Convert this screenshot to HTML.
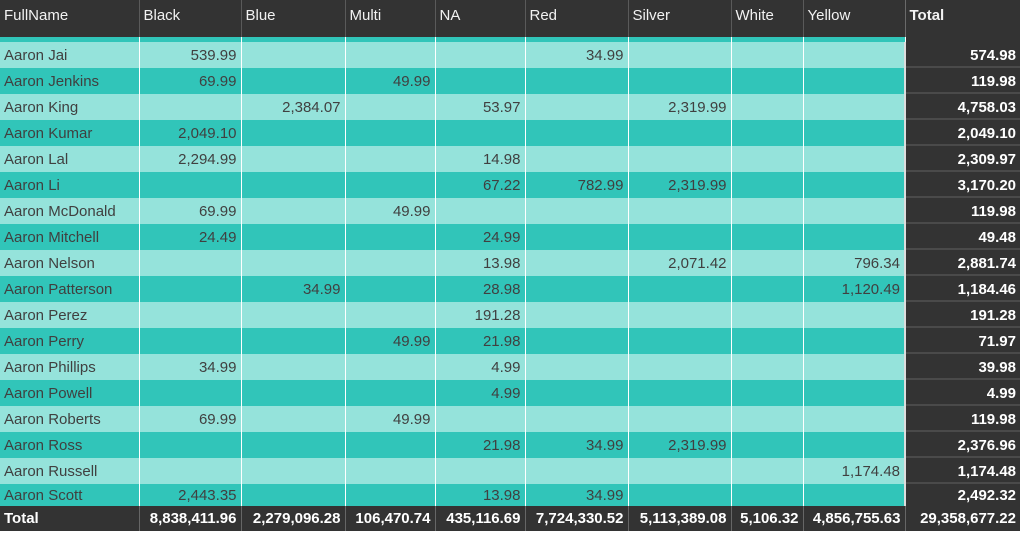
<!DOCTYPE html>
<html><head><meta charset="utf-8"><style>
html,body{margin:0;padding:0;background:#fff;width:1024px;height:534px;overflow:hidden}
table{border-collapse:collapse;table-layout:fixed;width:1020px;font-family:"Liberation Sans",sans-serif;font-size:15px;position:absolute;left:0;top:0}
td{padding:0 4px;white-space:nowrap;overflow:hidden;text-align:right;color:#404040;border:none;border-left:1px solid rgba(255,255,255,0.25);box-sizing:border-box}
td:first-child{text-align:left;border-left:none}
tr.h td{background:#333;color:#f2f2f2;height:37px;text-align:left;vertical-align:top;padding-top:7px;border-left:1px solid #5a5a5a}
tr.h td:first-child{border-left:none}
tr.sp td{height:5px;background:#31c5b9;padding:0}
tr.l td{background:#95e3db;height:26px}
tr.d td{background:#31c5b9;height:26px}
td.t{background:#333 linear-gradient(#333 0,#333 24px,#4a4a4a 24px,#4a4a4a 26px)!important;color:#fff;font-weight:bold;border-left:2px solid #ddd}
tr.h td.t{border-left:1px solid #6a6a6a;background:#333!important}
tr.f td{background:#333;color:#fff;font-weight:bold;height:25px;border-left:1px solid #666}
tr.f td:first-child{border-left:none}
tr.last td{height:22px}
</style></head><body>
<table>
<colgroup><col style="width:139px"><col style="width:102px"><col style="width:104px"><col style="width:90px"><col style="width:90px"><col style="width:103px"><col style="width:103px"><col style="width:72px"><col style="width:102px"><col style="width:115px"></colgroup>
<tr class="h"><td>FullName</td><td>Black</td><td>Blue</td><td>Multi</td><td>NA</td><td>Red</td><td>Silver</td><td>White</td><td>Yellow</td><td class="t">Total</td></tr>
<tr class="sp"><td></td><td></td><td></td><td></td><td></td><td></td><td></td><td></td><td></td><td style="background:#333"></td></tr>
<tr class="l"><td>Aaron Jai</td><td>539.99</td><td></td><td></td><td></td><td>34.99</td><td></td><td></td><td></td><td class="t">574.98</td></tr>
<tr class="d"><td>Aaron Jenkins</td><td>69.99</td><td></td><td>49.99</td><td></td><td></td><td></td><td></td><td></td><td class="t">119.98</td></tr>
<tr class="l"><td>Aaron King</td><td></td><td>2,384.07</td><td></td><td>53.97</td><td></td><td>2,319.99</td><td></td><td></td><td class="t">4,758.03</td></tr>
<tr class="d"><td>Aaron Kumar</td><td>2,049.10</td><td></td><td></td><td></td><td></td><td></td><td></td><td></td><td class="t">2,049.10</td></tr>
<tr class="l"><td>Aaron Lal</td><td>2,294.99</td><td></td><td></td><td>14.98</td><td></td><td></td><td></td><td></td><td class="t">2,309.97</td></tr>
<tr class="d"><td>Aaron Li</td><td></td><td></td><td></td><td>67.22</td><td>782.99</td><td>2,319.99</td><td></td><td></td><td class="t">3,170.20</td></tr>
<tr class="l"><td>Aaron McDonald</td><td>69.99</td><td></td><td>49.99</td><td></td><td></td><td></td><td></td><td></td><td class="t">119.98</td></tr>
<tr class="d"><td>Aaron Mitchell</td><td>24.49</td><td></td><td></td><td>24.99</td><td></td><td></td><td></td><td></td><td class="t">49.48</td></tr>
<tr class="l"><td>Aaron Nelson</td><td></td><td></td><td></td><td>13.98</td><td></td><td>2,071.42</td><td></td><td>796.34</td><td class="t">2,881.74</td></tr>
<tr class="d"><td>Aaron Patterson</td><td></td><td>34.99</td><td></td><td>28.98</td><td></td><td></td><td></td><td>1,120.49</td><td class="t">1,184.46</td></tr>
<tr class="l"><td>Aaron Perez</td><td></td><td></td><td></td><td>191.28</td><td></td><td></td><td></td><td></td><td class="t">191.28</td></tr>
<tr class="d"><td>Aaron Perry</td><td></td><td></td><td>49.99</td><td>21.98</td><td></td><td></td><td></td><td></td><td class="t">71.97</td></tr>
<tr class="l"><td>Aaron Phillips</td><td>34.99</td><td></td><td></td><td>4.99</td><td></td><td></td><td></td><td></td><td class="t">39.98</td></tr>
<tr class="d"><td>Aaron Powell</td><td></td><td></td><td></td><td>4.99</td><td></td><td></td><td></td><td></td><td class="t">4.99</td></tr>
<tr class="l"><td>Aaron Roberts</td><td>69.99</td><td></td><td>49.99</td><td></td><td></td><td></td><td></td><td></td><td class="t">119.98</td></tr>
<tr class="d"><td>Aaron Ross</td><td></td><td></td><td></td><td>21.98</td><td>34.99</td><td>2,319.99</td><td></td><td></td><td class="t">2,376.96</td></tr>
<tr class="l"><td>Aaron Russell</td><td></td><td></td><td></td><td></td><td></td><td></td><td></td><td>1,174.48</td><td class="t">1,174.48</td></tr>
<tr class="d last"><td>Aaron Scott</td><td>2,443.35</td><td></td><td></td><td>13.98</td><td>34.99</td><td></td><td></td><td></td><td class="t">2,492.32</td></tr>
<tr class="f"><td>Total</td><td>8,838,411.96</td><td>2,279,096.28</td><td>106,470.74</td><td>435,116.69</td><td>7,724,330.52</td><td>5,113,389.08</td><td>5,106.32</td><td>4,856,755.63</td><td>29,358,677.22</td></tr>
</table>
</body></html>
